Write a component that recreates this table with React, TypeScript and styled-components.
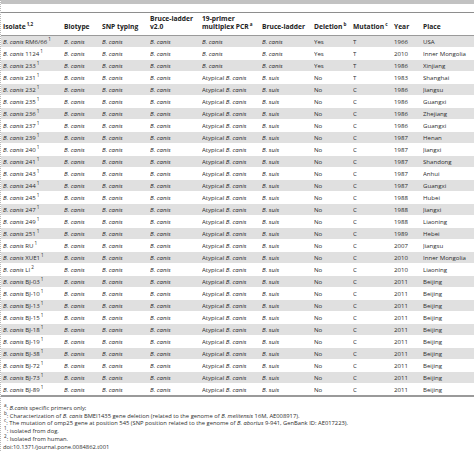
import styled, { createGlobalStyle } from "styled-components";

const GlobalStyle = createGlobalStyle`
  html, body {
    margin: 0;
    padding: 0;
    background: #ffffff;
  }
  body {
    font-family: "Open Sans", "Liberation Sans", sans-serif;
    color: #2e2e2e;
  }
`;

type Isolate = {
  name: string;
  source: 1 | 2;
  typical: boolean;
  deletion: string;
  mutation: string;
  year: string;
  place: string;
};

const isolates: Isolate[] = [
  { name: "RM6/66", source: 1, typical: true, deletion: "Yes", mutation: "T", year: "1966", place: "USA" },
  { name: "1124", source: 1, typical: true, deletion: "Yes", mutation: "T", year: "2010", place: "Inner Mongolia" },
  { name: "233", source: 1, typical: true, deletion: "Yes", mutation: "T", year: "1986", place: "Xinjiang" },
  { name: "231", source: 1, typical: false, deletion: "No", mutation: "T", year: "1983", place: "Shanghai" },
  { name: "232", source: 1, typical: false, deletion: "No", mutation: "C", year: "1986", place: "Jiangsu" },
  { name: "235", source: 1, typical: false, deletion: "No", mutation: "C", year: "1986", place: "Guangxi" },
  { name: "236", source: 1, typical: false, deletion: "No", mutation: "C", year: "1986", place: "Zhejiang" },
  { name: "237", source: 1, typical: false, deletion: "No", mutation: "C", year: "1986", place: "Guangxi" },
  { name: "239", source: 1, typical: false, deletion: "No", mutation: "C", year: "1987", place: "Henan" },
  { name: "240", source: 1, typical: false, deletion: "No", mutation: "C", year: "1987", place: "Jiangxi" },
  { name: "241", source: 1, typical: false, deletion: "No", mutation: "C", year: "1987", place: "Shandong" },
  { name: "243", source: 1, typical: false, deletion: "No", mutation: "C", year: "1987", place: "Anhui" },
  { name: "244", source: 1, typical: false, deletion: "No", mutation: "C", year: "1987", place: "Guangxi" },
  { name: "245", source: 1, typical: false, deletion: "No", mutation: "C", year: "1988", place: "Hubei" },
  { name: "247", source: 1, typical: false, deletion: "No", mutation: "C", year: "1988", place: "Jiangxi" },
  { name: "249", source: 1, typical: false, deletion: "No", mutation: "C", year: "1988", place: "Liaoning" },
  { name: "251", source: 1, typical: false, deletion: "No", mutation: "C", year: "1989", place: "Hebei" },
  { name: "RU", source: 1, typical: false, deletion: "No", mutation: "C", year: "2007", place: "Jiangsu" },
  { name: "XUE1", source: 1, typical: false, deletion: "No", mutation: "C", year: "2010", place: "Inner Mongolia" },
  { name: "LI", source: 2, typical: false, deletion: "No", mutation: "C", year: "2010", place: "Liaoning" },
  { name: "BJ-03", source: 1, typical: false, deletion: "No", mutation: "C", year: "2011", place: "Beijing" },
  { name: "BJ-10", source: 1, typical: false, deletion: "No", mutation: "C", year: "2011", place: "Beijing" },
  { name: "BJ-13", source: 1, typical: false, deletion: "No", mutation: "C", year: "2011", place: "Beijing" },
  { name: "BJ-15", source: 1, typical: false, deletion: "No", mutation: "C", year: "2011", place: "Beijing" },
  { name: "BJ-18", source: 1, typical: false, deletion: "No", mutation: "C", year: "2011", place: "Beijing" },
  { name: "BJ-19", source: 1, typical: false, deletion: "No", mutation: "C", year: "2011", place: "Beijing" },
  { name: "BJ-38", source: 1, typical: false, deletion: "No", mutation: "C", year: "2011", place: "Beijing" },
  { name: "BJ-72", source: 1, typical: false, deletion: "No", mutation: "C", year: "2011", place: "Beijing" },
  { name: "BJ-73", source: 1, typical: false, deletion: "No", mutation: "C", year: "2011", place: "Beijing" },
  { name: "BJ-89", source: 1, typical: false, deletion: "No", mutation: "C", year: "2011", place: "Beijing" },
];

// column widths, left to right
const columns = [63, 38, 48, 52, 60, 52, 39, 41, 29, 52];

export default function App(): JSX.Element {
  return (
    <Page>
      <GlobalStyle />
      <TopBand />
      <Table>
        <colgroup>
          {columns.map((w, i) => (
            <col key={i} style={{ width: w }} />
          ))}
        </colgroup>
        <thead>
          <tr>
            <HeadCell first>
              Isolate<Sup>1,2</Sup>
            </HeadCell>
            <HeadCell>Biotype</HeadCell>
            <HeadCell>SNP typing</HeadCell>
            <HeadCell>
              Bruce-ladder
              <br />
              v2.0
            </HeadCell>
            <HeadCell>
              19-primer
              <br />
              multiplex PCR<Sup>a</Sup>
            </HeadCell>
            <HeadCell>Bruce-ladder</HeadCell>
            <HeadCell>
              Deletion<Sup>b</Sup>
            </HeadCell>
            <HeadCell>
              Mutation<Sup>c</Sup>
            </HeadCell>
            <HeadCell>Year</HeadCell>
            <HeadCell>Place</HeadCell>
          </tr>
        </thead>
        <tbody>
          {isolates.map((row, i) => (
            <Row key={row.name} shaded={i % 2 === 0}>
              <Cell first>
                <I>B. canis</I> {row.name}
                <Sup>{row.source}</Sup>
              </Cell>
              <Cell>
                <I>B. canis</I>
              </Cell>
              <Cell>
                <I>B. canis</I>
              </Cell>
              <Cell>
                <I>B. canis</I>
              </Cell>
              <Cell>
                {row.typical ? (
                  <I>B. canis</I>
                ) : (
                  <>
                    Atypical <I>B. canis</I>
                  </>
                )}
              </Cell>
              <Cell>
                <I>{row.typical ? "B. canis" : "B. suis"}</I>
              </Cell>
              <Cell>{row.deletion}</Cell>
              <Cell>{row.mutation}</Cell>
              <Cell>{row.year}</Cell>
              <Cell>{row.place}</Cell>
            </Row>
          ))}
        </tbody>
      </Table>
      <Notes>
        <Note>
          <Sup>a</Sup>: <I>B.canis</I> specific primers only;
        </Note>
        <Note>
          <Sup>b</Sup>: Characterization of <I>B. canis</I> BMEI1435 gene deletion (related to the genome of{" "}
          <I>B. melitensis</I> 16M, AE008917).
        </Note>
        <Note>
          <Sup>c</Sup>: The mutation of omp25 gene at position 545 (SNP position related to the genome of{" "}
          <I>B. abortus</I> 9-941, GenBank ID: AE017223).
        </Note>
        <Note>
          <Sup>1</Sup>: isolated from dog.
        </Note>
        <Note>
          <Sup>2</Sup>: Isolated from human.
        </Note>
        <Note>doi:10.1371/journal.pone.0084862.t001</Note>
      </Notes>
    </Page>
  );
}

const Page = styled("div")`
  width: 474px;
  height: 451px;
  overflow: hidden;
  border-left: 1px dotted #b8b8b8;
  box-sizing: border-box;
`;

const TopBand = styled("div")`
  height: 4px;
  background: #c2c2c2;
  margin-bottom: 8px;
`;

const Table = styled("table")`
  width: 473px;
  table-layout: fixed;
  border-collapse: collapse;
  border-top: 1px solid #8e8e8e;
  border-bottom: 2px solid #9a9a9a;
`;

const HeadCell = styled("th")<{ first?: boolean }>`
  height: 23px;
  padding: 0 0 4px ${(p) => (p.first ? "2px" : "0")};
  box-sizing: border-box;
  text-align: left;
  vertical-align: bottom;
  font-size: 6.7px;
  line-height: 8px;
  font-weight: 700;
  color: #222222;
  white-space: nowrap;
  border-bottom: 1px solid #9a9a9a;
`;

const Row = styled("tr")<{ shaded: boolean }>`
  background: ${(p) => (p.shaded ? "#e0e0e0" : "#ffffff")};
  border-bottom: 1px solid #ffffff;
`;

const Cell = styled("td")<{ first?: boolean }>`
  height: 11px;
  padding: 0 0 0 ${(p) => (p.first ? "2px" : "0")};
  font-size: 6.1px;
  line-height: 11px;
  color: #2c2c2c;
  white-space: nowrap;
  overflow: hidden;
`;

const I = styled("i")`
  font-style: italic;
`;

const Sup = styled("sup")`
  font-size: 4.6px;
  line-height: 0;
  vertical-align: 3px;
  margin-left: 1px;
`;

const Notes = styled("div")`
  padding: 8px 0 0 2px;
`;

const Note = styled("div")`
  font-size: 5.8px;
  line-height: 7.7px;
  color: #2c2c2c;
  white-space: nowrap;
`;
